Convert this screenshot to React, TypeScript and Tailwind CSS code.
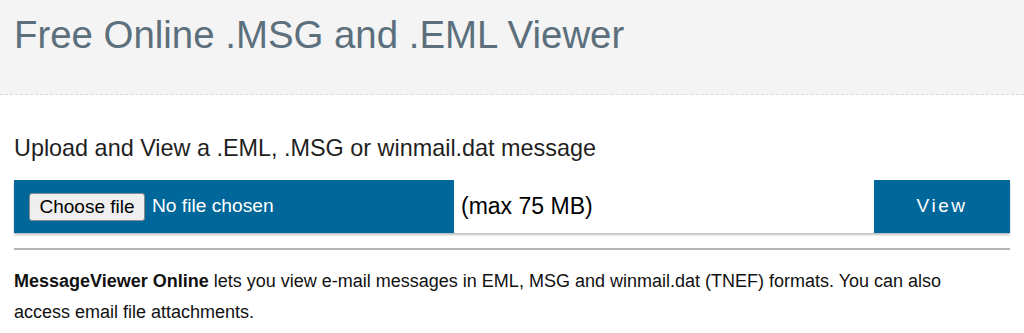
export default function App() {
  return (
    <div className="min-h-[333px] bg-white" style={{ fontFamily: '"Liberation Sans", Arial, sans-serif' }}>
      <header className="h-[95px] border-b border-dashed border-[#dcdcdc] bg-[#f4f4f4] px-[14px] pt-[13px]">
        <h1 className="text-[38.4px] font-normal leading-[44px] text-[#5b6f7c]">Free Online .MSG and .EML Viewer</h1>
      </header>

      <main className="px-[14px]">
        <h2 className="mt-[39px] text-[23.4px] leading-[28px] text-[#1f1f1f]">Upload and View a .EML, .MSG or winmail.dat message</h2>

        <form className="mt-[18px] flex h-[53px] shadow-[0_2px_2px_rgba(0,0,0,0.25)]" onSubmit={(e) => e.preventDefault()}>
          <div className="flex w-[440px] items-center gap-[7px] bg-[#00679a] pl-[15px]">
            <button
              type="button"
              className="h-[28px] w-[116px] rounded-[3px] border border-[#8a8a8a] bg-[#efefef] text-[19px] leading-none text-black"
            >
              Choose file
            </button>
            <span className="text-[19.2px] text-white">No file chosen</span>
          </div>
          <div className="flex flex-1 items-center pl-[7px] text-[23px] text-black">(max 75 MB)</div>
          <button type="submit" className="w-[136px] bg-[#00679a] text-[19px] tracking-[2.5px] text-white">
            View
          </button>
        </form>

        <hr className="mt-[15px] border-t-[2px] border-[#b5b5b5]" />

        <p className="mt-[16px] max-w-[960px] text-[18px] leading-[31px] text-[#111]">
          <strong className="font-bold">MessageViewer Online</strong> lets you view e-mail messages in EML, MSG and winmail.dat (TNEF) formats. You can also access email file attachments.
        </p>
      </main>
    </div>
  )
}
